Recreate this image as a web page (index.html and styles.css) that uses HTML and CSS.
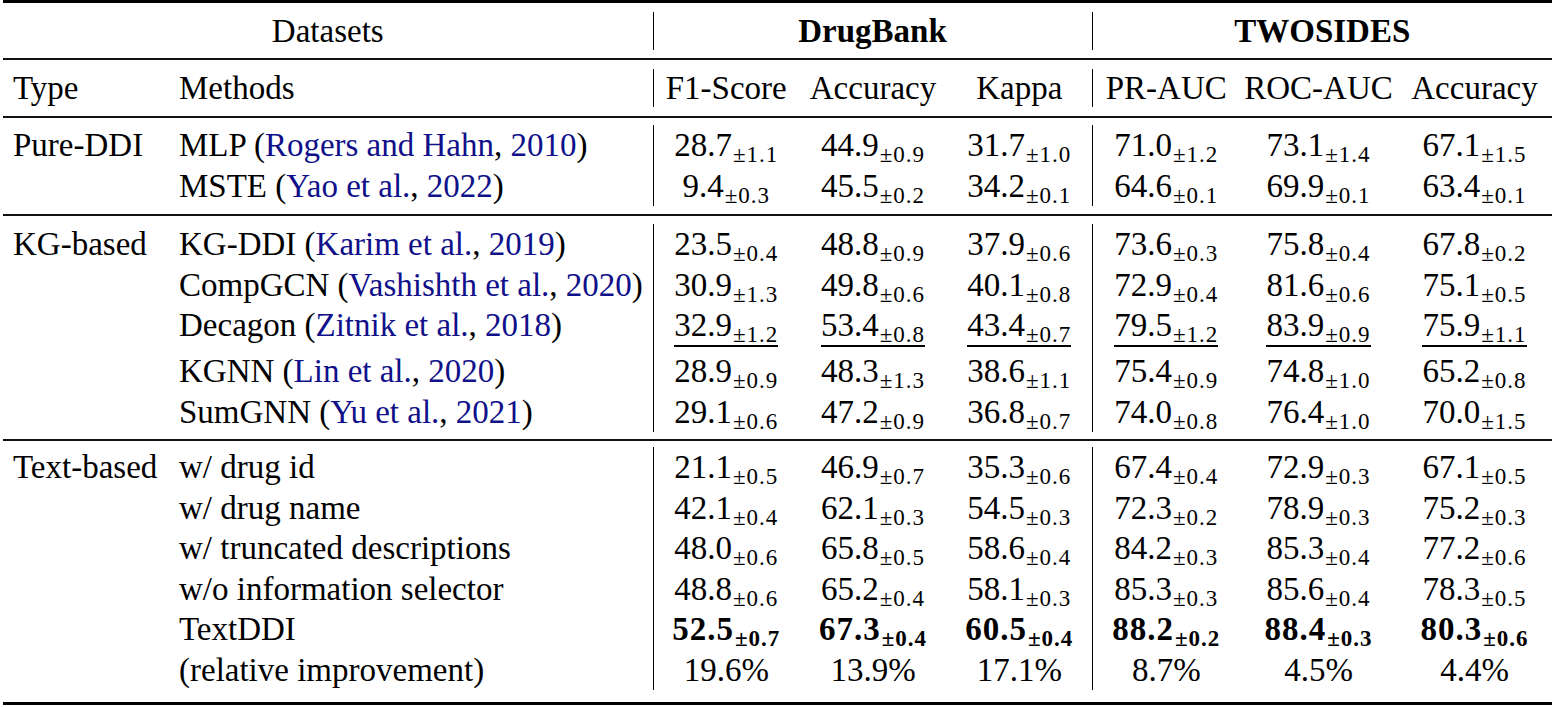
FILE: index.html
```html
<!DOCTYPE html>
<html>
<head>
<meta charset="utf-8">
<title>DDI results</title>
<link rel="stylesheet" href="styles.css">
</head>
<body>
<table class="results">
  <colgroup>
    <col class="c-type"><col class="c-method">
    <col class="c-f1"><col class="c-acc"><col class="c-kappa">
    <col class="c-pr"><col class="c-roc"><col class="c-acc2">
  </colgroup>
  <thead>
    <tr class="pad p9"><td colspan="8"></td></tr>
    <tr class="row head">
      <th colspan="2">Datasets</th>
      <th colspan="3" class="group vl">DrugBank</th>
      <th colspan="3" class="group vl">TWOSIDES</th>
    </tr>
    <tr class="pad p8"><td colspan="8"></td></tr>
  </thead>
  <tbody>
    <tr class="pad p9"><td colspan="8"></td></tr>
    <tr class="row head">
      <th class="type">Type</th><th class="method">Methods</th>
      <th class="vl">F1-Score</th><th>Accuracy</th><th>Kappa</th>
      <th class="vl">PR-AUC</th><th>ROC-AUC</th><th>Accuracy</th>
    </tr>
    <tr class="pad p9"><td colspan="8"></td></tr>
  </tbody>
  <tbody>
    <tr class="pad p7"><td colspan="8"></td></tr>
    <tr class="row">
      <td class="type">Pure-DDI</td><td class="method">MLP (<span class="cite">Rogers and Hahn</span>, <span class="cite">2010</span>)</td>
      <td class="vl">28.7<sub>±1.1</sub></td><td>44.9<sub>±0.9</sub></td><td>31.7<sub>±1.0</sub></td>
      <td class="vl">71.0<sub>±1.2</sub></td><td>73.1<sub>±1.4</sub></td><td>67.1<sub>±1.5</sub></td>
    </tr>
    <tr class="row">
      <td class="type"></td><td class="method">MSTE (<span class="cite">Yao et al.</span>, <span class="cite">2022</span>)</td>
      <td class="vl">9.4<sub>±0.3</sub></td><td>45.5<sub>±0.2</sub></td><td>34.2<sub>±0.1</sub></td>
      <td class="vl">64.6<sub>±0.1</sub></td><td>69.9<sub>±0.1</sub></td><td>63.4<sub>±0.1</sub></td>
    </tr>
    <tr class="pad p8"><td colspan="8"></td></tr>
  </tbody>
  <tbody>
    <tr class="pad p8"><td colspan="8"></td></tr>
    <tr class="row">
      <td class="type">KG-based</td><td class="method">KG-DDI (<span class="cite">Karim et al.</span>, <span class="cite">2019</span>)</td>
      <td class="vl">23.5<sub>±0.4</sub></td><td>48.8<sub>±0.9</sub></td><td>37.9<sub>±0.6</sub></td>
      <td class="vl">73.6<sub>±0.3</sub></td><td>75.8<sub>±0.4</sub></td><td>67.8<sub>±0.2</sub></td>
    </tr>
    <tr class="row">
      <td class="type"></td><td class="method">CompGCN (<span class="cite">Vashishth et al.</span>, <span class="cite">2020</span>)</td>
      <td class="vl">30.9<sub>±1.3</sub></td><td>49.8<sub>±0.6</sub></td><td>40.1<sub>±0.8</sub></td>
      <td class="vl">72.9<sub>±0.4</sub></td><td>81.6<sub>±0.6</sub></td><td>75.1<sub>±0.5</sub></td>
    </tr>
    <tr class="row second">
      <td class="type"></td><td class="method">Decagon (<span class="cite">Zitnik et al.</span>, <span class="cite">2018</span>)</td>
      <td class="vl"><span class="ul">32.9<sub>±1.2</sub></span></td><td><span class="ul">53.4<sub>±0.8</sub></span></td><td><span class="ul">43.4<sub>±0.7</sub></span></td>
      <td class="vl"><span class="ul">79.5<sub>±1.2</sub></span></td><td><span class="ul">83.9<sub>±0.9</sub></span></td><td><span class="ul">75.9<sub>±1.1</sub></span></td>
    </tr>
    <tr class="row">
      <td class="type"></td><td class="method">KGNN (<span class="cite">Lin et al.</span>, <span class="cite">2020</span>)</td>
      <td class="vl">28.9<sub>±0.9</sub></td><td>48.3<sub>±1.3</sub></td><td>38.6<sub>±1.1</sub></td>
      <td class="vl">75.4<sub>±0.9</sub></td><td>74.8<sub>±1.0</sub></td><td>65.2<sub>±0.8</sub></td>
    </tr>
    <tr class="row">
      <td class="type"></td><td class="method">SumGNN (<span class="cite">Yu et al.</span>, <span class="cite">2021</span>)</td>
      <td class="vl">29.1<sub>±0.6</sub></td><td>47.2<sub>±0.9</sub></td><td>36.8<sub>±0.7</sub></td>
      <td class="vl">74.0<sub>±0.8</sub></td><td>76.4<sub>±1.0</sub></td><td>70.0<sub>±1.5</sub></td>
    </tr>
    <tr class="pad p7"><td colspan="8"></td></tr>
  </tbody>
  <tbody>
    <tr class="pad p6"><td colspan="8"></td></tr>
    <tr class="row">
      <td class="type">Text-based</td><td class="method">w/ drug id</td>
      <td class="vl">21.1<sub>±0.5</sub></td><td>46.9<sub>±0.7</sub></td><td>35.3<sub>±0.6</sub></td>
      <td class="vl">67.4<sub>±0.4</sub></td><td>72.9<sub>±0.3</sub></td><td>67.1<sub>±0.5</sub></td>
    </tr>
    <tr class="row">
      <td class="type"></td><td class="method">w/ drug name</td>
      <td class="vl">42.1<sub>±0.4</sub></td><td>62.1<sub>±0.3</sub></td><td>54.5<sub>±0.3</sub></td>
      <td class="vl">72.3<sub>±0.2</sub></td><td>78.9<sub>±0.3</sub></td><td>75.2<sub>±0.3</sub></td>
    </tr>
    <tr class="row">
      <td class="type"></td><td class="method">w/ truncated descriptions</td>
      <td class="vl">48.0<sub>±0.6</sub></td><td>65.8<sub>±0.5</sub></td><td>58.6<sub>±0.4</sub></td>
      <td class="vl">84.2<sub>±0.3</sub></td><td>85.3<sub>±0.4</sub></td><td>77.2<sub>±0.6</sub></td>
    </tr>
    <tr class="row">
      <td class="type"></td><td class="method">w/o information selector</td>
      <td class="vl">48.8<sub>±0.6</sub></td><td>65.2<sub>±0.4</sub></td><td>58.1<sub>±0.3</sub></td>
      <td class="vl">85.3<sub>±0.3</sub></td><td>85.6<sub>±0.4</sub></td><td>78.3<sub>±0.5</sub></td>
    </tr>
    <tr class="row best">
      <td class="type"></td><td class="method">TextDDI</td>
      <td class="vl">52.5<sub>±0.7</sub></td><td>67.3<sub>±0.4</sub></td><td>60.5<sub>±0.4</sub></td>
      <td class="vl">88.2<sub>±0.2</sub></td><td>88.4<sub>±0.3</sub></td><td>80.3<sub>±0.6</sub></td>
    </tr>
    <tr class="row">
      <td class="type"></td><td class="method">(relative improvement)</td>
      <td class="vl">19.6%</td><td>13.9%</td><td>17.1%</td>
      <td class="vl">8.7%</td><td>4.5%</td><td>4.4%</td>
    </tr>
    <tr class="pad p12"><td colspan="8"></td></tr>
  </tbody>
</table>
</body>
</html>
```

FILE: styles.css
```css
html, body {
  margin: 0;
  padding: 0;
  background: #ffffff;
}

body {
  padding: 0 0 0 3px;
  font-family: "Liberation Serif", "Times New Roman", serif;
  color: #000000;
}

.results {
  border-collapse: collapse;
  table-layout: fixed;
  width: 1549px;
  border-top: 3px solid #000;
  border-bottom: 3px solid #000;
  font-size: 33px;
}

.results tbody {
  border-top: 2px solid #111;
}

.c-type { width: 159px; }
.c-method { width: 491px; }
.c-f1 { width: 146px; }
.c-acc { width: 148px; }
.c-kappa { width: 145px; }
.c-pr { width: 148px; }
.c-roc { width: 157px; }
.c-acc2 { width: 155px; }

.results th,
.results td {
  padding: 0;
  font-weight: normal;
  text-align: center;
  white-space: nowrap;
  vertical-align: top;
}

.row th,
.row td {
  height: 40.5px;
  line-height: 40.5px;
}

.row.head th {
  height: 38px;
  line-height: 38px;
}

.pad td {
  line-height: 0;
  font-size: 0;
}

.p6 td { height: 6px; }
.p7 td { height: 7px; }
.p8 td { height: 8px; }
.p9 td { height: 9px; }
.p12 td { height: 12px; }

.results .type {
  text-align: left;
  padding-left: 10px;
}

.results .method {
  text-align: left;
  padding-left: 17px;
}

.results .group {
  font-weight: bold;
}

.results .vl {
  border-left: 1px solid #000;
}

.cite {
  color: #10108a;
}

sub {
  font-size: 23px;
  line-height: 0;
  letter-spacing: 1px;
  padding-left: 1px;
  vertical-align: -6px;
}

.ul {
  border-bottom: 2px solid #000;
  padding-bottom: 2px;
}

.second td {
  height: 46px;
}

.best td:not(.type):not(.method) {
  font-weight: bold;
  letter-spacing: 1px;
}
```
